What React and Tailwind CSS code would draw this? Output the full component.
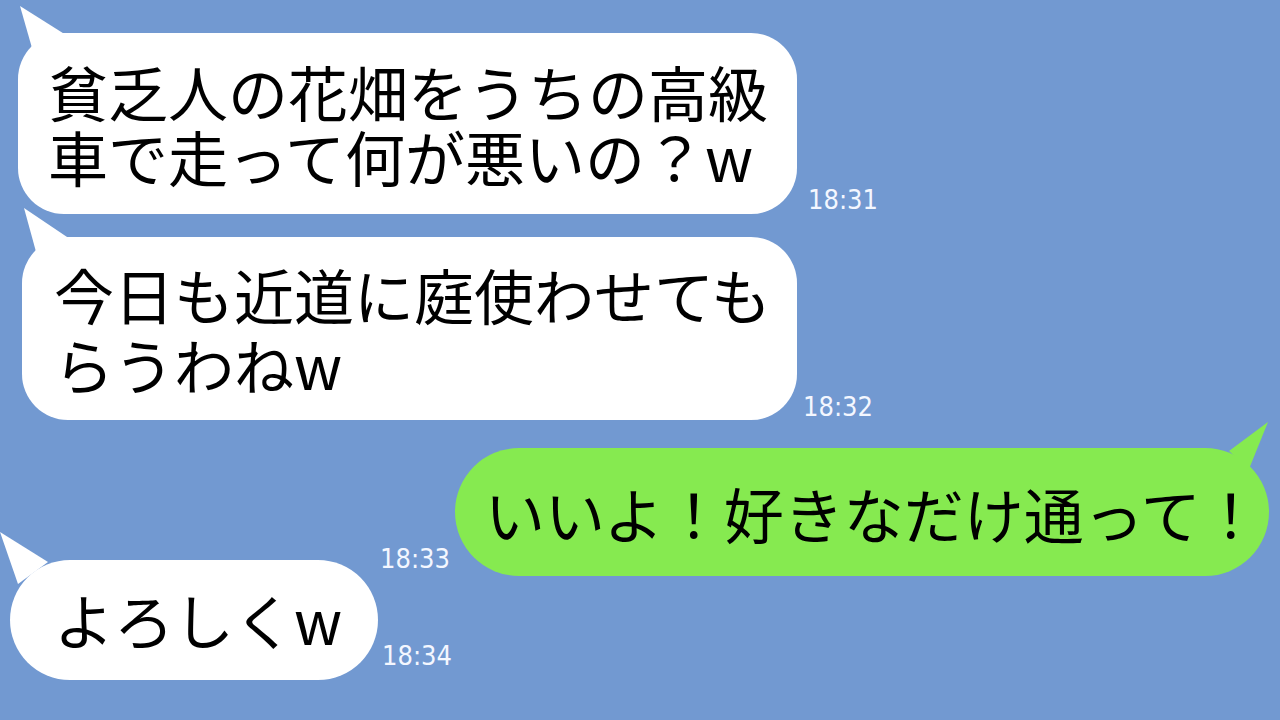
export default function App() {
  const jp = { fontFamily: '"Noto Sans CJK JP", "Noto Sans", sans-serif' };
  const ts = { fontFamily: '"DejaVu Sans Condensed", "DejaVu Sans", sans-serif' };
  const tsCls = "text-[27px] leading-none text-[#f4f7ff] font-stretch-condensed";
  return (
    <div
      className="w-[1280px] h-[720px] bg-[#7299d1] overflow-hidden flex flex-col pt-[33px]"
      style={jp}
    >
      {/* Row 1 */}
      <div className="flex items-end ml-[18px]">
        <div className="relative w-[779px] h-[181px] rounded-[46px] bg-white flex items-center pl-[30px] pb-[2px]">
          <svg className="absolute left-0 top-[-30px]" width="50" height="60" viewBox="0 0 50 60">
            <polygon points="2,3 16,52 48,32" fill="#ffffff" />
          </svg>
          <p className="relative text-[60px] leading-[65px] text-black whitespace-pre">
            {"貧乏人の花畑をうちの高級\n車で走って何が悪いの？w"}
          </p>
        </div>
        <span className={`ml-[11px] mb-[1px] ${tsCls}`} style={ts}>18:31</span>
      </div>

      {/* Row 2 */}
      <div className="flex items-end ml-[22px] mt-[23px]">
        <div className="relative w-[775px] h-[183px] rounded-[46px] bg-white flex items-center pl-[32px]">
          <svg className="absolute left-0 top-[-30px]" width="50" height="60" viewBox="0 0 50 60">
            <polygon points="2,1 16,52 48,32" fill="#ffffff" />
          </svg>
          <p className="relative text-[60px] leading-[70px] text-black whitespace-pre">
            {"今日も近道に庭使わせても\nらうわねw"}
          </p>
        </div>
        <span className={`ml-[6px] mb-0 ${tsCls}`} style={ts}>18:32</span>
      </div>

      {/* Row 3 */}
      <div className="flex items-end justify-end pr-[11px] mt-[28px]">
        <span className={`mr-[5px] mb-[4px] ${tsCls}`} style={ts}>18:33</span>
        <div className="relative w-[814px] h-[128px] rounded-[64px] bg-[#86ea50] flex items-center pl-[30px]">
          <svg className="absolute right-0 top-[-27px]" width="50" height="60" viewBox="0 0 50 60">
            <polygon points="49,1 10,30 30,48" fill="#86ea50" />
          </svg>
          <p className="relative text-[60px] leading-[65px] text-black whitespace-pre">
            いいよ！好きなだけ通って！
          </p>
        </div>
      </div>

      {/* Row 4 */}
      <div className="flex items-end ml-[10px] -mt-[16px]">
        <div className="relative w-[368px] h-[120px] rounded-[60px] bg-white flex items-center pl-[44px] pb-[4px]">
          <svg className="absolute left-[-10px] top-[-28px]" width="60" height="60" viewBox="0 0 60 60">
            <polygon points="0,0 18,52 48,30" fill="#ffffff" />
          </svg>
          <p className="relative text-[60px] leading-[65px] text-black whitespace-pre">
            よろしくw
          </p>
        </div>
        <span className={`ml-[4px] mb-[11px] ${tsCls}`} style={ts}>18:34</span>
      </div>
    </div>
  );
}
